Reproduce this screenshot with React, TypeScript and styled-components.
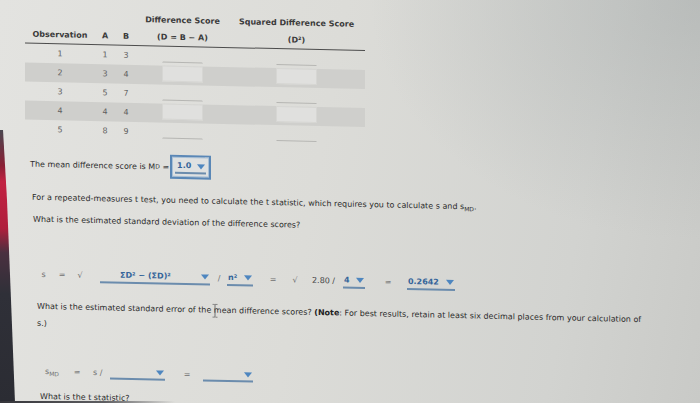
import React from "react";
import styled, { createGlobalStyle } from "styled-components";

const Global = createGlobalStyle`
  html, body { margin: 0; padding: 0; width: 700px; height: 403px; overflow: hidden; }
  body { font-family: "DejaVu Sans", Verdana, sans-serif; }
`;

const Screen = styled.div`
  position: relative;
  width: 700px;
  height: 403px;
  overflow: hidden;
  background:
    radial-gradient(ellipse 330px 240px at 700px 0px, rgba(160, 166, 166, 0.45), rgba(160, 166, 166, 0) 100%),
    linear-gradient(100deg, #e3e3e0 0%, #dcdcd8 45%, #d2d3d0 80%, #c9cac7 100%);
  &::before {
    content: "";
    position: absolute;
    left: 0;
    top: 130px;
    width: 16px;
    height: 273px;
    clip-path: polygon(0 0, 3px 0, 7px 70px, 11px 170px, 15px 273px, 0 273px);
    background: linear-gradient(
      to bottom,
      #4a4750 0%,
      #8a2035 13%,
      #c22242 19%,
      #b01e3c 36%,
      #4a3040 45%,
      #2f3038 60%,
      #2b2c33 100%
    );
  }
  &::after {
    content: "";
    position: absolute;
    left: 0;
    bottom: 0;
    width: 175px;
    height: 2px;
    background: linear-gradient(to right, #35353a 0%, #5f5f62 60%, rgba(110, 110, 110, 0) 100%);
  }
`;

const Page = styled.div`
  display: flex;
  flex-direction: column;
  width: 675px;
  padding: 7.5px 0 0 25px;
  transform: skewY(1.26deg);
  transform-origin: 0 0;
  color: #2c2c2c;
  font-size: 8px;
  line-height: 17px;
`;

/* ---------- table ---------- */
const Table = styled.div`
  display: flex;
  flex-direction: column;
  width: 340px;
`;

const HeadRow = styled.div`
  display: grid;
  grid-template-columns: 70px 20px 22px 91px 137px;
  height: 34px;
  border-bottom: 1px solid #4c4c4c;
`;

const HeadCell = styled.div`
  display: flex;
  flex-direction: column;
  justify-content: flex-end;
  align-items: center;
  font-weight: bold;
  color: #3a3a3a;
  white-space: nowrap;
`;

const Row = styled.div<{ $shade?: boolean }>`
  display: grid;
  grid-template-columns: 70px 20px 22px 91px 137px;
  height: 19px;
  background: ${(p) => (p.$shade ? "#cfcfcc" : "transparent")};
`;

const NumCell = styled.div`
  display: flex;
  align-items: center;
  justify-content: center;
  color: #606060;
`;

const InputCell = styled.div`
  display: flex;
  justify-content: center;
  align-items: flex-start;
`;

const InputBox = styled.div<{ $shade?: boolean }>`
  width: 41px;
  height: 16px;
  box-sizing: border-box;
  background: ${(p) => (p.$shade ? "#e0e0de" : "transparent")};
  border: 1px solid ${(p) => (p.$shade ? "#d6d6d3" : "transparent")};
  border-bottom: 1px solid ${(p) => (p.$shade ? "#d6d6d3" : "#b6b6b3")};
`;

/* ---------- text ---------- */
const Line = styled.div<{ $ml: number; $mt: number }>`
  display: flex;
  align-items: center;
  margin-left: ${(p) => p.$ml}px;
  margin-top: ${(p) => p.$mt}px;
  white-space: nowrap;
`;

const Para = styled.p<{ $ml: number; $mt: number; $w: number }>`
  margin: ${(p) => p.$mt}px 0 0 ${(p) => p.$ml}px;
  width: ${(p) => p.$w}px;
`;

const Sub = styled.sub`
  font-size: 6px;
  line-height: 0;
  vertical-align: -2px;
`;

const Bold = styled.b`
  font-weight: bold;
  color: #222;
`;

const CursorWrap = styled.span`
  position: relative;
`;

const IBeam = styled.svg`
  position: absolute;
  left: -2px;
  top: -2px;
`;

const FocusBox = styled.span`
  display: inline-flex;
  align-items: center;
  justify-content: center;
  width: 41px;
  height: 24px;
  box-sizing: border-box;
  border: 2px solid #5a87b6;
  box-shadow: inset 0 0 0 1px #a9c0d6;
  background: #dfe1e1;
  margin-left: 1px;
`;

const Select = styled.span<{ $w: number; $lead?: number }>`
  display: inline-flex;
  align-items: center;
  justify-content: space-between;
  box-sizing: border-box;
  width: ${(p) => p.$w}px;
  height: 14px;
  padding: 0 1px 0 ${(p) => p.$lead ?? 1}px;
  border-bottom: 2px solid #6b8cad;
  color: #35659a;
  font-weight: bold;
  line-height: 12px;
`;

const Caret = styled.span`
  width: 0;
  height: 0;
  border-left: 4px solid transparent;
  border-right: 4px solid transparent;
  border-top: 5px solid #4e86bf;
`;

const Formula = styled.div<{ $mt: number; $h: number }>`
  display: flex;
  align-items: center;
  height: ${(p) => p.$h}px;
  margin-top: ${(p) => p.$mt}px;
  white-space: nowrap;
`;

const Tok = styled.span<{ $ml: number; $w: number; $left?: boolean; $dim?: boolean }>`
  display: inline-block;
  margin-left: ${(p) => p.$ml}px;
  width: ${(p) => p.$w}px;
  text-align: ${(p) => (p.$left ? "left" : "center")};
  color: ${(p) => (p.$dim ? "#707070" : "#3e3e3e")};
`;

const Slot = styled.span<{ $ml: number }>`
  display: inline-flex;
  margin-left: ${(p) => p.$ml}px;
`;

const rows = [
  { o: 1, a: 1, b: 3 },
  { o: 2, a: 3, b: 4 },
  { o: 3, a: 5, b: 7 },
  { o: 4, a: 4, b: 4 },
  { o: 5, a: 8, b: 9 },
];

export default function App() {
  return (
    <>
      <Global />
      <Screen>
        <Page>
          <Table>
            <HeadRow>
              <HeadCell>Observation</HeadCell>
              <HeadCell>A</HeadCell>
              <HeadCell>B</HeadCell>
              <HeadCell>
                <span>Difference Score</span>
                <span>(D = B − A)</span>
              </HeadCell>
              <HeadCell>
                <span>Squared Difference Score</span>
                <span>(D²)</span>
              </HeadCell>
            </HeadRow>
            {rows.map((r, i) => {
              const shade = i % 2 === 1;
              return (
                <Row key={r.o} $shade={shade}>
                  <NumCell>{r.o}</NumCell>
                  <NumCell>{r.a}</NumCell>
                  <NumCell>{r.b}</NumCell>
                  <InputCell>
                    <InputBox $shade={shade} />
                  </InputCell>
                  <InputCell>
                    <InputBox $shade={shade} />
                  </InputCell>
                </Row>
              );
            })}
          </Table>

          <Line $ml={5} $mt={13.5}>
            The mean difference score is M<Sub>D</Sub>&nbsp;=
            <FocusBox>
              <Select $w={31} $lead={2}>
                1.0 <Caret />
              </Select>
            </FocusBox>
          </Line>

          <Para $ml={7} $mt={13} $w={640}>
            For a repeated-measures t test, you need to calculate the t statistic, which requires you to calculate s and s
            <Sub>MD</Sub>.
          </Para>
          <Para $ml={8} $mt={4.5} $w={640}>
            What is the estimated standard deviation of the difference scores?
          </Para>

          <Formula $mt={37} $h={20}>
            <Tok $ml={15} $w={7} $dim>s</Tok>
            <Tok $ml={11} $w={8} $dim>=</Tok>
            <Tok $ml={10} $w={8} $dim>√</Tok>
            <Slot $ml={16}>
              <Select $w={110} $lead={20}>
                ΣD² − (ΣD)² <Caret />
              </Select>
            </Slot>
            <Tok $ml={4} $w={10} $dim>/</Tok>
            <Slot $ml={3}>
              <Select $w={26}>
                n² <Caret />
              </Select>
            </Slot>
            <Tok $ml={15} $w={10} $dim>=</Tok>
            <Tok $ml={12} $w={10} $dim>√</Tok>
            <Tok $ml={12} $w={29} $left>2.80 /</Tok>
            <Slot $ml={2}>
              <Select $w={22}>
                4 <Caret />
              </Select>
            </Slot>
            <Tok $ml={18} $w={10} $dim>=</Tok>
            <Slot $ml={14}>
              <Select $w={48}>
                0.2642 <Caret />
              </Select>
            </Slot>
          </Formula>

          <Para $ml={12} $mt={13} $w={616}>
            What is the estimated standard error of the{" "}
            <CursorWrap>
              m
              <IBeam width="6" height="14" viewBox="0 0 6 14">
                <path d="M0.5 0.5 H2.5 L3 1 L3.5 0.5 H5.5 M3 1 V13 M0.5 13.5 H2.5 L3 13 L3.5 13.5 H5.5" stroke="#555" strokeWidth="0.8" fill="none" />
              </IBeam>
            </CursorWrap>
            ean difference scores? <Bold>(Note</Bold>: For best results, retain at least six decimal places from your calculation of s.)
          </Para>

          <Formula $mt={29.5} $h={20}>
            <Tok $ml={20} $w={15} $dim $left>
              s<Sub>MD</Sub>
            </Tok>
            <Tok $ml={13} $w={8} $dim>=</Tok>
            <Tok $ml={12} $w={12} $dim $left>s /</Tok>
            <Slot $ml={5}>
              <Select $w={55}>
                <span /> <Caret />
              </Select>
            </Slot>
            <Tok $ml={18} $w={8} $dim>=</Tok>
            <Slot $ml={12}>
              <Select $w={50}>
                <span /> <Caret />
              </Select>
            </Slot>
          </Formula>

          <Para $ml={15} $mt={6.5} $w={600}>
            What is the t statistic?
          </Para>
        </Page>
      </Screen>
    </>
  );
}
